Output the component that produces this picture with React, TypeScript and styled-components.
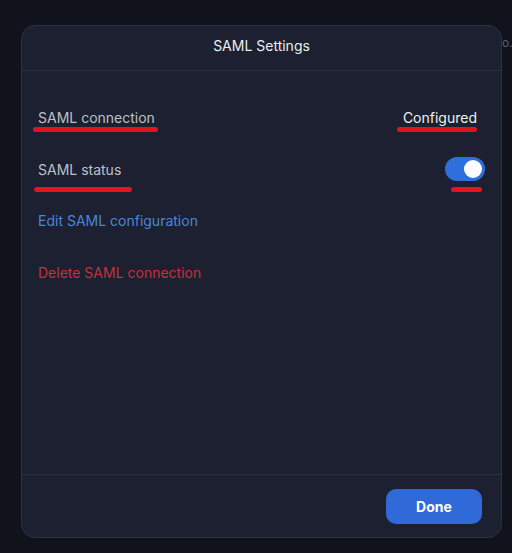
import React, { useState } from "react";
import styled, { createGlobalStyle } from "styled-components";

const GlobalStyle = createGlobalStyle`
  html, body {
    margin: 0;
    padding: 0;
    background: #10131c;
    font-family: Inter, "Noto Sans", "Liberation Sans", sans-serif;
  }
`;

const Page = styled.div`
  position: relative;
  width: 512px;
  height: 553px;
  padding: 25px 0 0 21px;
  box-sizing: border-box;
  overflow: hidden;
`;

const BehindText = styled.span`
  position: absolute;
  top: 35px;
  left: 502px;
  font-size: 12px;
  color: #5a5f6c;
`;

const Modal = styled.div`
  width: 481px;
  height: 513px;
  box-sizing: border-box;
  background: #1c2030;
  border: 1px solid #2d3142;
  border-radius: 14px;
  display: flex;
  flex-direction: column;
`;

const Header = styled.div`
  height: 45px;
  box-sizing: border-box;
  padding-bottom: 6px;
  border-bottom: 1px solid #2d3142;
  display: flex;
  align-items: center;
  justify-content: center;
  font-size: 14px;
  color: #eceef2;
`;

const Body = styled.div`
  flex: 1;
  padding: 34px 16px 0 16px;
  display: flex;
  flex-direction: column;
  gap: 28px;
`;

const Row = styled.div`
  height: 24px;
  display: flex;
  align-items: center;
  justify-content: space-between;
`;

const Mark = styled.span<{ $top: number; $l: number; $r: number }>`
  position: relative;
  display: inline-block;
  line-height: 24px;
  &::after {
    content: "";
    position: absolute;
    top: ${(p) => p.$top}px;
    left: ${(p) => p.$l}px;
    right: ${(p) => p.$r}px;
    height: 5px;
    border-radius: 3px;
    background: #e3141b;
  }
`;

const Label = styled.span`
  font-size: 14px;
  color: #bcc0c9;
`;

const Value = styled.span`
  font-size: 14px;
  color: #eef0f3;
  margin-right: 8px;
`;

const Toggle = styled.button<{ $on: boolean }>`
  width: 40px;
  height: 24px;
  border: none;
  padding: 3px;
  border-radius: 12px;
  background: ${(p) => (p.$on ? "#2f6fdc" : "#3a3f50")};
  display: flex;
  justify-content: ${(p) => (p.$on ? "flex-end" : "flex-start")};
  cursor: pointer;
  box-sizing: border-box;
`;

const Knob = styled.span`
  width: 18px;
  height: 18px;
  border-radius: 50%;
  background: #ffffff;
`;

const LinkText = styled.a<{ $danger?: boolean }>`
  font-size: 14px;
  line-height: 24px;
  color: ${(p) => (p.$danger ? "#c2333b" : "#4a86d9")};
  text-decoration: none;
  cursor: pointer;
`;

const Footer = styled.div`
  border-top: 1px solid #2d3142;
  height: 63px;
  padding: 14px 19px 0 0;
  box-sizing: border-box;
  display: flex;
  justify-content: flex-end;
  align-items: flex-start;
`;

const DoneButton = styled.button`
  width: 96px;
  height: 35px;
  border: none;
  border-radius: 10px;
  background: #2f6ad8;
  color: #ffffff;
  font-family: inherit;
  font-size: 14px;
  font-weight: 700;
  cursor: pointer;
`;

const App = () => {
  const [enabled, setEnabled] = useState(true);

  return (
    <>
      <GlobalStyle />
      <Page>
        <BehindText>o.</BehindText>
        <Modal>
          <Header>SAML Settings</Header>
          <Body>
            <Row>
              <Mark $top={22} $l={-5} $r={-3}>
                <Label>SAML connection</Label>
              </Mark>
              <Mark $top={22} $l={-6} $r={8}>
                <Value>Configured</Value>
              </Mark>
            </Row>
            <Row>
              <Mark $top={30} $l={-4} $r={-11}>
                <Label>SAML status</Label>
              </Mark>
              <Mark $top={30} $l={6} $r={3}>
                <Toggle $on={enabled} onClick={() => setEnabled(!enabled)}>
                  <Knob />
                </Toggle>
              </Mark>
            </Row>
            <Row>
              <LinkText>Edit SAML configuration</LinkText>
            </Row>
            <Row>
              <LinkText $danger>Delete SAML connection</LinkText>
            </Row>
          </Body>
          <Footer>
            <DoneButton>Done</DoneButton>
          </Footer>
        </Modal>
      </Page>
    </>
  );
};

export default App;
